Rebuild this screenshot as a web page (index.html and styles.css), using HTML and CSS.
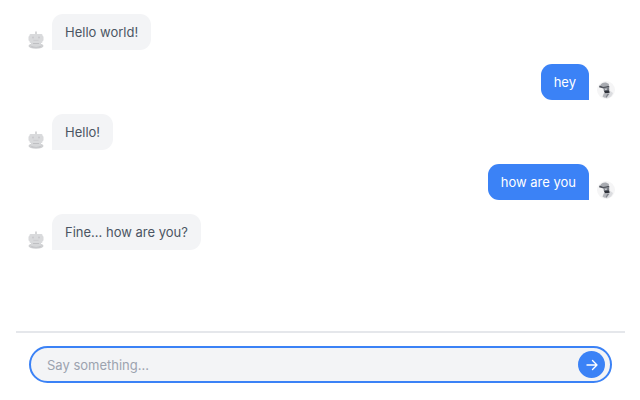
FILE: index.html
```html
<!DOCTYPE html>
<html lang="en">
<head>
<meta charset="utf-8">
<title>Chat</title>
<link rel="stylesheet" href="styles.css">
</head>
<body>
<svg class="sprite" aria-hidden="true">
  <symbol id="bot" viewBox="0 0 16 18">
    <ellipse cx="8" cy="15" rx="7.5" ry="2.7" fill="#cfd0d2"/>
    <path d="M7.300 .5h1.400v3H7.300z" fill="#c6c7c9"/>
    <path d="M3 11h10v3.500q-5 2.500-10 0z" fill="#d6d7d9"/>
    <rect x="0.500" y="5" width="15" height="5" rx="1" fill="#d8d9db"/>
    <rect x="1.500" y="3" width="13" height="9" rx="1.200" fill="#d9dadc"/>
    <circle cx="5" cy="6.500" r="1" fill="#c8c9cc"/>
    <circle cx="11" cy="6.500" r="1" fill="#c8c9cc"/>
    <path d="M5.500 9.400h5" stroke="#cbccce" stroke-width=".8"/>
    <path d="M5 12h6v1H5zM3 15q5 2 10 0l-1 1.500H4z" fill="#bfc0c3"/>
  </symbol>
  <symbol id="user" viewBox="0 0 18 18">
    <circle cx="9" cy="9" r="9" fill="#f5f5f6"/>
    <path d="M9 10l3-1 4 3q-1 4-6 5.500L6 16z" fill="#dcdde0"/>
    <path d="M3 4.500Q5 1 9 1.500l3 1.500-.5 2-5 .8z" fill="#a7aab0"/>
    <path d="M2.500 4.500l4 1.200 5.500-1 .5 1.600-6 1.200-4.500-1.300z" fill="#50545c"/>
    <path d="M6.500 7l5.500-1 .3 3-2 1.500-3.500-.5z" fill="#7b7f87"/>
    <path d="M7.500 7.500h2.500l-.3 1.500H8z" fill="#c8cacf"/>
    <path d="M7 10l5-.7.7 2.500-4.700.7z" fill="#2e3239"/>
    <path d="M7 12l4 .8-3.500 4-2-1.200z" fill="#b4b6bb"/>
    <path d="M10.500 12.500l2 .3-3 4-1.200-.5z" fill="#81848b"/>
  </symbol>
</svg>
<main class="chat">
  <ol class="messages">
    <li class="message"><svg class="avatar-bot" role="img" aria-label="Bot"><use href="#bot"/></svg><p class="bubble">Hello world!</p></li>
    <li class="message message-own"><p class="bubble">hey</p><svg class="avatar-user" role="img" aria-label="You"><use href="#user"/></svg></li>
    <li class="message"><svg class="avatar-bot" role="img" aria-label="Bot"><use href="#bot"/></svg><p class="bubble">Hello!</p></li>
    <li class="message message-own"><p class="bubble">how are you</p><svg class="avatar-user" role="img" aria-label="You"><use href="#user"/></svg></li>
    <li class="message"><svg class="avatar-bot" role="img" aria-label="Bot"><use href="#bot"/></svg><p class="bubble">Fine... how are you?</p></li>
  </ol>
  <form class="composer">
    <div class="field">
      <input class="field-input" type="text" placeholder="Say something..." aria-label="Message">
      <button class="send" type="button" aria-label="Send">
        <svg class="send-icon" viewBox="0 0 14 14" fill="none" stroke="currentColor" stroke-width="1.400" stroke-linecap="round" stroke-linejoin="round"><path d="M2 7h10M7.500 2.500L12 7l-4.500 4.500"/></svg>
      </button>
    </div>
  </form>
</main>
</body>
</html>
```
FILE: styles.css
```css
* {
  box-sizing: border-box;
}

body {
  margin: 0;
  background: #fff;
  color: #4b5563;
  font-family: Inter, "Liberation Sans", sans-serif;
  font-size: 13px;
  line-height: 20px;
}

.sprite {
  display: none;
}

.chat {
  display: flex;
  flex-direction: column;
  min-height: 100vh;
  padding: 14px 15px 17px 16px;
}

.messages {
  display: flex;
  flex: 1;
  flex-direction: column;
  gap: 14px;
  margin: 0;
  padding: 0 10px 0 12px;
  list-style: none;
}

.message {
  display: flex;
  align-items: flex-end;
  gap: 8px;
}

.message-own {
  justify-content: flex-end;
}

.bubble {
  margin: 0;
  padding: 8px 13px;
  border-radius: 11px 11px 11px 0;
  background: #f3f4f6;
}

.message-own .bubble {
  border-radius: 11px 11px 0 11px;
  background: #3b82f6;
  color: #fff;
}

.avatar-bot,
.avatar-user {
  height: 18px;
  margin-bottom: 1px;
}

.avatar-bot {
  width: 16px;
}

.avatar-user {
  width: 18px;
}

.composer {
  padding: 13px 13px 0;
  border-top: 2px solid #e5e7eb;
}

.field {
  display: flex;
  align-items: center;
  padding: 3px 5px 3px 16px;
  border: 2px solid #3b82f6;
  border-radius: 20px;
  background: #f3f4f6;
}

.field-input {
  flex: 1;
  min-width: 0;
  padding: 0;
  border: 0;
  outline: 0;
  background: transparent;
  color: #4b5563;
  font: inherit;
}

.field-input::placeholder {
  color: #9ca3af;
  opacity: 1;
}

.send {
  display: grid;
  place-items: center;
  width: 27px;
  height: 27px;
  padding: 0;
  border: 0;
  border-radius: 50%;
  background: #3b82f6;
  color: #fff;
}

.send-icon {
  width: 14px;
  height: 14px;
}
```
